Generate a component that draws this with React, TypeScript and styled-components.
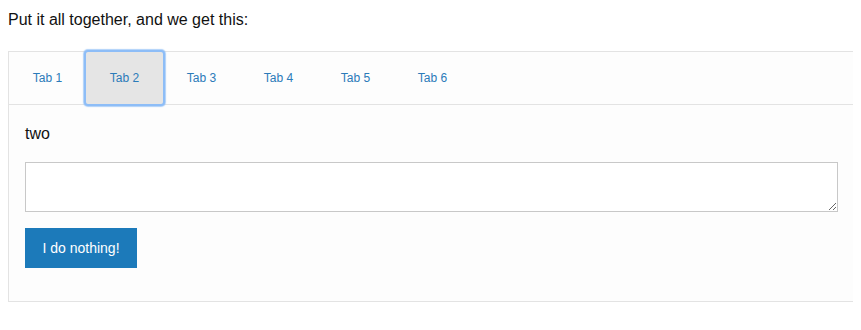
import React, {useState} from 'react';
import styled, {createGlobalStyle} from "styled-components";

const tabs = [
    {label: 'Tab 1', content: 'one'},
    {label: 'Tab 2', content: 'two'},
    {label: 'Tab 3', content: 'three'},
    {label: 'Tab 4', content: 'four'},
    {label: 'Tab 5', content: 'five'},
    {label: 'Tab 6', content: 'six'},
]

export default function App() {
    const [active, setActive] = useState<number>(1)

    return (
        <>
            <GlobalStyle/>
            <Intro>Put it all together, and we get this:</Intro>
            <Panel>
                <TabBar>
                    {tabs.map((tab, i) => (
                        <Tab key={tab.label}
                             $active={i === active}
                             onClick={() => setActive(i)}>
                            {tab.label}
                        </Tab>
                    ))}
                </TabBar>
                <Body>
                    <Text>{tabs[active].content}</Text>
                    <TextArea/>
                    <ActionButton type="button">
                        I do nothing!
                    </ActionButton>
                </Body>
            </Panel>
        </>
    );
}

const GlobalStyle = createGlobalStyle`
  body {
    margin: 8px;
    background: #fff;
    font-family: "Liberation Sans", Arial, sans-serif;
    color: #111;
  }
`

const Intro = styled.p`
  margin: 0 0 19px;
  font-size: 16px;
  line-height: 24px;
`

const Panel = styled.div`
  margin-right: -2px;
  border: 1px solid #e3e3e3;
  background: #fdfdfd;
`

const TabBar = styled.div`
  display: flex;
  border-bottom: 1px solid #e3e3e3;
`

const Tab = styled.button<{ $active: boolean }>`
  width: 77px;
  height: 52px;
  border: none;
  border-radius: 2px;
  background: ${p => p.$active ? '#e5e5e5' : 'transparent'};
  box-shadow: ${p => p.$active
          ? '0 0 0 2px #8dbdf7, 0 0 1px 3px rgba(141, 189, 247, 0.7)'
          : 'none'};
  outline: none;
  color: #2b7bb9;
  font-family: "Liberation Sans", Arial, sans-serif;
  font-size: 12px;
  padding: 0;
  cursor: pointer;
`

const Body = styled.div`
  padding: 17px 16px 33px;
`

const Text = styled.p`
  margin: 0;
  font-size: 16px;
  line-height: 24px;
`

const TextArea = styled.textarea`
  display: block;
  box-sizing: border-box;
  width: 100%;
  height: 50px;
  margin-top: 16px;
  border: 1px solid #c8c8c8;
  background: #fff;
`

const ActionButton = styled.button`
  display: block;
  margin-top: 16px;
  width: 112px;
  height: 40px;
  border: none;
  background: #1c7aba;
  color: #fff;
  font-family: "Liberation Sans", Arial, sans-serif;
  font-size: 14px;
  padding: 0;
`
